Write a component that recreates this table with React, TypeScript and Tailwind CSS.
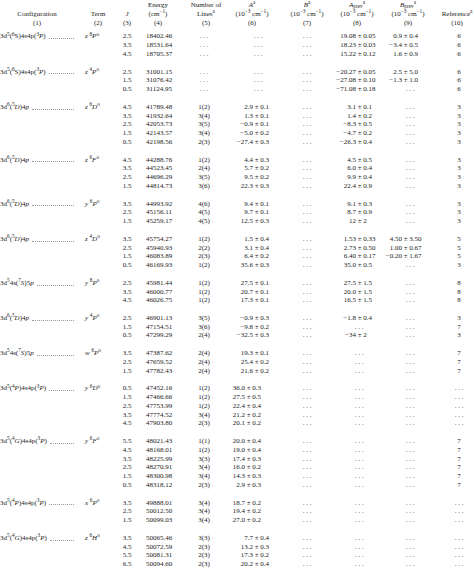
import type { ReactNode } from 'react';

type Row = [string, string, string, string, string, string, string, string, boolean?];

type Group = { config: ReactNode; term: ReactNode; rows: Row[] };

const D = '...';

const cfgS = <>3d<sup>5</sup>(<sup>6</sup>S)4s4p(<sup>3</sup><i>P</i>)</>;
const cfgD = <>3d<sup>6</sup>(<sup>5</sup><i>D</i>)4<i>p</i></>;
const cfg7S = <>3d<sup>5</sup>4s(<sup>7</sup><i>S</i>)5<i>p</i></>;
const cfgP = <>3d<sup>5</sup>(<sup>4</sup><i>P</i>)4s4p(<sup>3</sup><i>P</i>)</>;
const cfgG = <>3d<sup>5</sup>(<sup>4</sup><i>G</i>)4s4p(<sup>3</sup><i>P</i>)</>;

const term = (letter: string, mult: string, l: string) => (
  <>
    <i>{letter}</i> <sup>{mult}</sup>
    <i>{l}</i>
    <sup>o</sup>
  </>
);

const groups: Group[] = [
  {
    config: cfgS,
    term: term('z', '8', 'P'),
    rows: [
      ['2.5', '18402.46', D, D, D, '19.08 ± 0.05', '0.9 ± 0.4', '6'],
      ['3.5', '18531.64', D, D, D, '18.23 ± 0.03', '−3.4 ± 0.5', '6'],
      ['4.5', '18705.37', D, D, D, '15.22 ± 0.12', '1.6 ± 0.9', '6'],
    ],
  },
  {
    config: cfgS,
    term: term('z', '4', 'P'),
    rows: [
      ['2.5', '31001.15', D, D, D, '−20.27 ± 0.05', '2.5 ± 5.0', '6'],
      ['1.5', '31076.42', D, D, D, '−27.08 ± 0.10', '−1.3 ± 1.0', '6'],
      ['0.5', '31124.95', D, D, D, '−71.08 ± 0.18', D, '6'],
    ],
  },
  {
    config: cfgD,
    term: term('z', '6', 'D'),
    rows: [
      ['4.5', '41789.48', '1(2)', '2.9 ± 0.1', D, '3.1 ± 0.1', D, '3'],
      ['3.5', '41932.64', '3(4)', '1.3 ± 0.1', D, '1.4 ± 0.2', D, '3'],
      ['2.5', '42053.73', '3(5)', '−0.9 ± 0.1', D, '−8.3 ± 0.5', D, '3'],
      ['1.5', '42143.57', '3(4)', '−5.0 ± 0.2', D, '−4.7 ± 0.2', D, '3'],
      ['0.5', '42198.56', '2(3)', '−27.4 ± 0.3', D, '−26.3 ± 0.4', D, '3'],
    ],
  },
  {
    config: cfgD,
    term: term('z', '6', 'F'),
    rows: [
      ['4.5', '44288.76', '1(2)', '4.4 ± 0.3', D, '4.5 ± 0.5', D, '3'],
      ['3.5', '44523.45', '2(4)', '5.7 ± 0.2', D, '6.0 ± 0.4', D, '3'],
      ['2.5', '44696.29', '3(5)', '9.5 ± 0.2', D, '9.9 ± 0.4', D, '3'],
      ['1.5', '44814.73', '3(6)', '22.3 ± 0.3', D, '22.4 ± 0.9', D, '3'],
    ],
  },
  {
    config: cfgD,
    term: term('y', '6', 'P'),
    rows: [
      ['3.5', '44993.92', '4(6)', '9.4 ± 0.1', D, '9.1 ± 0.3', D, '3'],
      ['2.5', '45156.11', '4(5)', '9.7 ± 0.1', D, '8.7 ± 0.9', D, '3'],
      ['1.5', '45259.17', '4(5)', '12.5 ± 0.3', D, '12 ± 2', D, '3'],
    ],
  },
  {
    config: cfgD,
    term: term('z', '4', 'D'),
    rows: [
      ['3.5', '45754.27', '1(2)', '1.5 ± 0.4', D, '1.53 ± 0.33', '4.50 ± 3.50', '5'],
      ['2.5', '45940.93', '2(2)', '3.1 ± 0.4', D, '2.73 ± 0.50', '1.00 ± 0.67', '5'],
      ['1.5', '46083.89', '2(3)', '6.4 ± 0.2', D, '6.40 ± 0.17', '−0.20 ± 1.67', '5'],
      ['0.5', '46169.93', '1(2)', '35.6 ± 0.3', D, '35.0 ± 0.5', D, '3'],
    ],
  },
  {
    config: cfg7S,
    term: term('y', '8', 'P'),
    rows: [
      ['2.5', '45981.44', '1(2)', '27.5 ± 0.1', D, '27.5 ± 1.5', D, '8'],
      ['3.5', '46000.77', '1(2)', '20.7 ± 0.1', D, '20.0 ± 1.5', D, '8'],
      ['4.5', '46026.75', '1(2)', '17.3 ± 0.1', D, '16.5 ± 1.5', D, '8'],
    ],
  },
  {
    config: cfgD,
    term: term('y', '4', 'P'),
    rows: [
      ['2.5', '46901.13', '3(5)', '−0.9 ± 0.3', D, '−1.8 ± 0.4', D, '3'],
      ['1.5', '47154.51', '3(6)', '−9.8 ± 0.2', D, D, D, '7'],
      ['0.5', '47299.29', '2(4)', '−32.5 ± 0.3', D, '−34 ± 2', D, '3'],
    ],
  },
  {
    config: cfg7S,
    term: term('w', '6', 'P'),
    rows: [
      ['3.5', '47387.62', '2(4)', '19.3 ± 0.1', D, D, D, '7'],
      ['2.5', '47659.52', '2(4)', '25.4 ± 0.2', D, D, D, '7'],
      ['1.5', '47782.43', '2(4)', '21.6 ± 0.2', D, D, D, '7'],
    ],
  },
  {
    config: cfgP,
    term: term('y', '6', 'D'),
    rows: [
      ['0.5', '47452.16', '1(2)', '36.0 ± 0.3', D, D, D, D, true],
      ['1.5', '47466.66', '1(2)', '27.5 ± 0.5', D, D, D, D, true],
      ['2.5', '47753.99', '1(2)', '22.4 ± 0.4', D, D, D, D, true],
      ['3.5', '47774.52', '3(4)', '21.2 ± 0.2', D, D, D, D, true],
      ['4.5', '47903.80', '2(3)', '20.1 ± 0.2', D, D, D, D, true],
    ],
  },
  {
    config: cfgG,
    term: term('y', '6', 'F'),
    rows: [
      ['5.5', '48021.43', '1(1)', '20.0 ± 0.4', D, D, D, '7', true],
      ['4.5', '48168.01', '1(2)', '19.0 ± 0.4', D, D, D, '7', true],
      ['3.5', '48225.99', '3(3)', '17.4 ± 0.3', D, D, D, '7', true],
      ['2.5', '48270.91', '3(4)', '16.0 ± 0.2', D, D, D, '7', true],
      ['1.5', '48300.98', '3(4)', '14.3 ± 0.3', D, D, D, '7', true],
      ['0.5', '48318.12', '2(3)', '2.9 ± 0.3', D, D, D, '7', true],
    ],
  },
  {
    config: cfgP,
    term: term('x', '6', 'P'),
    rows: [
      ['3.5', '49888.01', '3(4)', '18.7 ± 0.2', D, D, D, D, true],
      ['2.5', '50012.50', '3(4)', '19.4 ± 0.2', D, D, D, D, true],
      ['1.5', '50099.03', '3(4)', '27.0 ± 0.2', D, D, D, D, true],
    ],
  },
  {
    config: cfgG,
    term: term('z', '6', 'H'),
    rows: [
      ['3.5', '50065.46', '3(3)', '7.7 ± 0.4', D, D, D, D],
      ['4.5', '50072.59', '2(3)', '13.2 ± 0.3', D, D, D, D],
      ['5.5', '50081.31', '2(3)', '17.3 ± 0.2', D, D, D, D],
      ['6.5', '50094.60', '2(3)', '20.2 ± 0.4', D, D, D, D],
    ],
  },
];

const Dots = () => <span className="whitespace-pre text-[#555]">. . .</span>;

const show = (v: string) => (v === D ? <Dots /> : v);

// value cell lined up on the ± sign
const PmCell = ({ value, cell, left }: { value: string; cell: string; left: string }) => {
  if (value === D) {
    return (
      <div className={`flex shrink-0 justify-center ${cell}`}>
        <Dots />
      </div>
    );
  }
  const [l, r] = value.split(' ± ');
  return (
    <div className={`flex shrink-0 ${cell}`}>
      <div className={`flex shrink-0 justify-end whitespace-nowrap ${left}`}>{l}</div>
      <div className="whitespace-pre">{` ± ${r}`}</div>
    </div>
  );
};

const HeadCell = ({ w, lines }: { w: string; lines: ReactNode[] }) => (
  <div className={`flex shrink-0 flex-col items-center ${w}`}>
    {lines.map((line, i) => (
      <div key={i} className="h-[8.8px] whitespace-nowrap leading-[8.8px]">
        {line}
      </div>
    ))}
  </div>
);

const unit = (
  <>
    (10<sup>−3</sup> cm<sup>−1</sup>)
  </>
);

const App = () => {
  return (
    <div className="min-h-screen w-[474px] bg-white pt-[1px] font-['Liberation_Serif',serif] text-[7px] text-[#222]">
      {/* header */}
      <div className="flex">
        <HeadCell w="w-[74px]" lines={['', 'Configuration', '(1)']} />
        <HeadCell w="w-[48px]" lines={['', 'Term', '(2)']} />
        <HeadCell w="w-[10px]" lines={['', <i>J</i>, '(3)']} />
        <HeadCell w="w-[52px]" lines={['Energy', <>(cm<sup>−1</sup>)</>, '(4)']} />
        <HeadCell w="w-[44px]" lines={['Number of', <>Lines<sup>a</sup></>, '(5)']} />
        <HeadCell w="w-[48px]" lines={[<><i>A</i><sup>a</sup></>, unit, '(6)']} />
        <HeadCell w="w-[62px]" lines={[<><i>B</i><sup>a</sup></>, unit, '(7)']} />
        <HeadCell w="w-[38px]" lines={[<><i>A</i><sub>prev</sub><sup>a</sup></>, unit, '(8)']} />
        <HeadCell w="w-[64px]" lines={[<><i>B</i><sub>prev</sub><sup>a</sup></>, unit, '(9)']} />
        <HeadCell w="w-[34px]" lines={['', <>Reference<sup>a</sup></>, '(10)']} />
      </div>

      {/* body */}
      <div className="mt-[5px] flex flex-col gap-y-[8.8px]">
        {groups.map((g, gi) => (
          <div key={gi} className="flex flex-col">
            {g.rows.map((r, ri) => (
              <div key={ri} className="flex h-[8.8px] items-center leading-[8.8px]">
                <div className="flex h-[8.8px] w-[74px] shrink-0 items-end">
                  {ri === 0 && (
                    <>
                      <span className="shrink-0 whitespace-nowrap leading-[8.8px]">{g.config}</span>
                      {/* dotted leader */}
                      <span className="mb-[2px] ml-[3px] h-0 flex-1 border-b border-dotted border-[#999]" />
                    </>
                  )}
                </div>
                <div className="w-[44px] shrink-0 whitespace-nowrap pl-[11px]">{ri === 0 && g.term}</div>
                <div className="w-[18px] shrink-0 text-center">{r[0]}</div>
                <div className="w-[46px] shrink-0 text-center">{r[1]}</div>
                <div className="w-[44px] shrink-0 text-center">{show(r[2])}</div>
                <PmCell value={r[3]} cell="w-[64px]" left={r[8] ? 'w-[19px]' : 'w-[27px]'} />
                <div className="flex w-[34px] shrink-0 justify-center">{show(r[4])}</div>
                <PmCell value={r[5]} cell="w-[70px]" left="w-[32px]" />
                <PmCell value={r[6]} cell="w-[32px]" left="w-[8px]" />
                <div className="w-[48px] shrink-0 pl-[18px] text-center">{show(r[7])}</div>
              </div>
            ))}
          </div>
        ))}
      </div>
    </div>
  );
};

export default App;
